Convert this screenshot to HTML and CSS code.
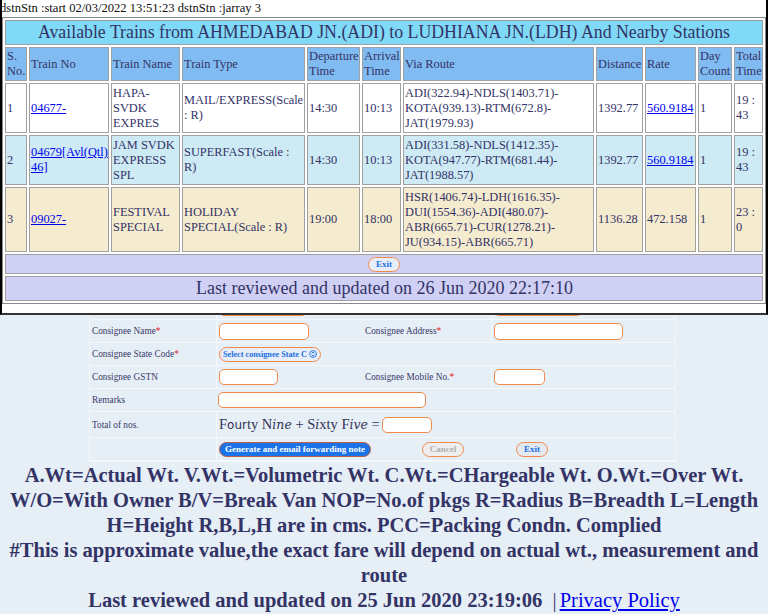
FILE: index.html
```html
<!DOCTYPE html>
<html>
<head>
<meta charset="utf-8">
<title>Available Trains</title>
<link rel="stylesheet" href="styles.css">
</head>
<body>
<div class="page">
  <div class="form">
    <div class="row row-top">
      <div class="cell"></div>
      <div class="cell vsep"><input class="inp w88" type="text"></div>
      <div class="cell"></div>
      <div class="cell vsep"><input class="inp w88" type="text"></div>
    </div>
    <div class="row">
      <div class="cell lbl">Consignee Name<span class="req">*</span></div>
      <div class="cell vsep"><input class="inp w90" type="text"></div>
      <div class="cell lbl lbl2">Consignee Address<span class="req">*</span></div>
      <div class="cell vsep"><input class="inp w129" type="text"></div>
    </div>
    <div class="row">
      <div class="cell lbl">Consignee State Code<span class="req">*</span></div>
      <div class="cell vsep">
        <div class="sel"><span class="sel-txt">Select consignee State C</span>
          <svg class="sel-ico" width="8" height="8" viewBox="0 0 8 8"><circle cx="4" cy="4" r="3.4" fill="none" stroke="#1a6fe0" stroke-width="0.9"/><path d="M2.6 3.4 L4 2.1 L5.4 3.4 M2.6 4.6 L4 5.9 L5.4 4.6" fill="none" stroke="#1a6fe0" stroke-width="0.9"/></svg>
        </div>
      </div>
      <div class="cell"></div>
      <div class="cell"></div>
    </div>
    <div class="row">
      <div class="cell lbl">Consignee GSTN</div>
      <div class="cell vsep"><input class="inp w59" type="text"></div>
      <div class="cell lbl lbl2">Consignee Mobile No.<span class="req">*</span></div>
      <div class="cell vsep"><input class="inp w51" type="text"></div>
    </div>
    <div class="row">
      <div class="cell lbl">Remarks</div>
      <div class="cell span3"><input class="inp w208" type="text"></div>
    </div>
    <div class="row row-cap">
      <div class="cell lbl">Total of nos.</div>
      <div class="cell span3 vsep"><span class="captcha">F<span class="c-sans">our</span>ty N<span class="c-it">ine</span> + S<span class="c-it">i</span>xty F<span class="c-it">ive</span> =</span><input class="inp w50" type="text"></div>
    </div>
    <div class="row">
      <div class="cell"></div>
      <div class="cell span3 vsep btns">
        <button class="btn btn-gen" type="button">Generate and email forwarding note</button>
        <button class="btn btn-cancel" type="button">Cancel</button>
        <button class="btn btn-exit" type="button">Exit</button>
      </div>
    </div>
  </div>
  <div class="notes">
    <p>A.Wt=Actual Wt. V.Wt.=Volumetric Wt. C.Wt.=CHargeable Wt. O.Wt.=Over Wt. W/O=With Owner B/V=Break Van NOP=No.of pkgs R=Radius B=Breadth L=Length H=Height R,B,L,H are in cms. PCC=Packing Condn. Complied</p>
    <p>#This is approximate value,the exact fare will depend on actual wt., measurement and route</p>
    <p>Last reviewed and updated on 25 Jun 2020 23:19:06 &nbsp;<span class="pipe">|</span><a href="#">Privacy Policy</a></p>
  </div>
</div>

<div class="popup">
  <div class="dbg">dstnStn :start 02/03/2022 13:51:23 dstnStn :jarray 3</div>
  <table class="trains">
    <colgroup>
      <col class="c1"><col class="c2"><col class="c3"><col class="c4"><col class="c5"><col class="c6"><col class="c7"><col class="c8"><col class="c9"><col class="c10"><col class="c11">
    </colgroup>
    <tr><td class="title" colspan="11">Available Trains from AHMEDABAD JN.(ADI) to LUDHIANA JN.(LDH) And Nearby Stations</td></tr>
    <tr class="head">
      <th>S. No.</th><th>Train No</th><th>Train Name</th><th>Train Type</th><th>Departure Time</th><th>Arrival Time</th><th>Via Route</th><th>Distance</th><th>Rate</th><th>Day Count</th><th>Total Time</th>
    </tr>
    <tr class="r1">
      <td>1</td><td><a href="#">04677-</a></td><td>HAPA-SVDK EXPRES</td><td>MAIL/EXPRESS(Scale : R)</td><td>14:30</td><td>10:13</td><td>ADI(322.94)-NDLS(1403.71)-KOTA(939.13)-RTM(672.8)-JAT(1979.93)</td><td>1392.77</td><td><a href="#">560.9184</a></td><td>1</td><td>19 : 43</td>
    </tr>
    <tr class="r2">
      <td>2</td><td><a href="#">04679[Avl(Qtl) 46]</a></td><td>JAM SVDK EXPRESS SPL</td><td>SUPERFAST(Scale : R)</td><td>14:30</td><td>10:13</td><td>ADI(331.58)-NDLS(1412.35)-KOTA(947.77)-RTM(681.44)-JAT(1988.57)</td><td>1392.77</td><td><a href="#">560.9184</a></td><td>1</td><td>19 : 43</td>
    </tr>
    <tr class="r3">
      <td>3</td><td><a href="#">09027-</a></td><td>FESTIVAL SPECIAL</td><td>HOLIDAY SPECIAL(Scale : R)</td><td>19:00</td><td>18:00</td><td>HSR(1406.74)-LDH(1616.35)-DUI(1554.36)-ADI(480.07)-ABR(665.71)-CUR(1278.21)-JU(934.15)-ABR(665.71)</td><td>1136.28</td><td>472.158</td><td>1</td><td>23 : 0</td>
    </tr>
    <tr class="exitrow"><td colspan="11"><button class="btn btn-pexit" type="button">Exit</button></td></tr>
    <tr class="revrow"><td colspan="11">Last reviewed and updated on 26 Jun 2020 22:17:10</td></tr>
  </table>
</div>
</body>
</html>
```

FILE: styles.css
```css
* { box-sizing: border-box; }
html, body { margin: 0; padding: 0; }
body {
  background: #e6eef6;
  font-family: "Liberation Serif", "Times New Roman", serif;
  color: #333366;
  width: 768px;
  height: 614px;
  overflow: hidden;
  position: relative;
}

/* ---------- underlying page ---------- */
.page { padding-top: 296px; }

.form {
  margin-left: 89px;
  width: 587px;
  border-left: 1px solid #f3f7fb;
  border-right: 1px solid #f3f7fb;
  border-bottom: 1px solid #f3f7fb;
}
.row {
  display: grid;
  grid-template-columns: 126px 145px 130px 185px;
  height: 23px;
  border-bottom: 1px solid #f6f9fc;
}
.row-top { height: 24px; }
.row-cap { height: 26px; }
.cell {
  display: flex;
  align-items: center;
  padding-left: 2px;
  white-space: nowrap;
}
.vsep { border-left: 1px solid #f6f9fc; }
.span3 { grid-column: 2 / 5; }
.lbl {
  font-size: 9.3px;
  color: #3a3a6a;
}
.lbl2 { padding-left: 4px; }
.req { color: #e02020; }

.inp {
  height: 17px;
  border: 1px solid #f08a4b;
  border-radius: 5px;
  background: #fff;
  padding: 0 3px;
  font-size: 10px;
  outline: none;
}
.w88 { width: 88px; }
.w90 { width: 90px; }
.w129 { width: 129px; }
.w59 { width: 59px; height: 16px; }
.w51 { width: 51px; height: 16px; }
.w208 { width: 208px; height: 16px; }
.w50 { width: 50px; height: 16px; }

.sel {
  display: flex;
  align-items: center;
  gap: 2px;
  width: 102px;
  height: 15px;
  border: 1px solid #f08a4b;
  border-radius: 8px;
  background: #e8eef8;
  padding: 0 2px 0 3px;
  font-size: 8.2px;
  font-weight: bold;
  color: #1a6fe0;
  white-space: nowrap;
  overflow: hidden;
}
.sel-txt { flex: none; }
.sel-ico { flex: none; }

.captcha {
  font-family: "Liberation Serif", serif;
  font-size: 14.5px;
  color: #333355;
  margin-right: 2px;
}
.c-sans { font-family: "DejaVu Sans", sans-serif; font-size: 12px; }
.c-it { font-style: italic; font-family: "DejaVu Serif", serif; font-size: 12.5px; }

.btns { padding-left: 2px; }
.btn {
  font-family: "Liberation Serif", serif;
  font-size: 9px;
  font-weight: bold;
  height: 15px;
  padding: 0;
  border-radius: 8px;
  border: 1px solid #f08a4b;
  cursor: pointer;
  line-height: 12px;
}
.btn-gen {
  width: 152px;
  background: #1a73e8;
  color: #fff;
  border-color: #c06040;
}
.btn-cancel {
  width: 42px;
  margin-left: 51px;
  background: #eeeeee;
  color: #b0b0b0;
}
.btn-exit {
  width: 32px;
  margin-left: 52px;
  background: #e4e8f0;
  color: #1a6fe0;
}

.notes {
  width: 768px;
  padding: 0 4px;
  text-align: center;
  font-weight: bold;
  font-size: 20.5px;
  line-height: 25.1px;
  color: #333366;
  padding-top: 1px;
}
.notes p { margin: 0; }
.notes .pipe { font-weight: normal; margin-right: 3px; }
.notes a { font-weight: normal; color: #0000ee; text-decoration: underline; }

/* ---------- popup window ---------- */
.popup {
  position: absolute;
  top: 0;
  left: 0;
  width: 768px;
  height: 315px;
  background: #fff;
  border-left: 2px solid #000;
  border-right: 2px solid #000;
  border-bottom: 2px solid #333;
}
.dbg {
  font-size: 12.6px;
  line-height: 17px;
  height: 17px;
  color: #111;
  margin-left: -2px;
  white-space: nowrap;
}
.trains {
  width: 764px;
  table-layout: fixed;
  border-collapse: separate;
  border-spacing: 2px;
  border: 1px solid #8a8a8a;
  font-size: 12.4px;
  line-height: 15px;
  color: #333366;
}
.trains td, .trains th {
  border: 1px solid #a0a0a0;
  padding: 1px 0 1px 1px;
  text-align: left;
  font-weight: normal;
  vertical-align: middle;
  overflow: hidden;
  word-wrap: break-word;
}
.c1 { width: 22px; }
.c2 { width: 80px; }
.c3 { width: 69px; }
.c4 { width: 123px; }
.c5 { width: 53px; }
.c6 { width: 39px; }
.c7 { width: 191px; }
.c8 { width: 47px; }
.c9 { width: 51px; }
.c10 { width: 34px; }
.c11 { width: 29px; }

.trains a { color: #0000ee; text-decoration: underline; }
.trains td.title {
  background: #80d9f6;
  text-align: center;
  font-size: 17.8px;
  line-height: 21px;
  padding: 1px 0;
  white-space: nowrap;
}
.head th { background: #80bbf1; height: 34px; }
.r1 td { background: #ffffff; height: 50px; }
.r2 td { background: #cdeaf5; height: 50px; }
.r3 td { background: #f5ebcf; height: 65px; }
.exitrow td {
  background: #d0d0f5;
  text-align: center;
  height: 20px;
  padding: 0;
}
.revrow td {
  background: #d0d0f5;
  text-align: center;
  font-size: 18px;
  line-height: 21px;
  height: 25px;
}
.btn-pexit {
  width: 32px;
  height: 15px;
  background: #e8eef8;
  color: #1a6fe0;
}
```
